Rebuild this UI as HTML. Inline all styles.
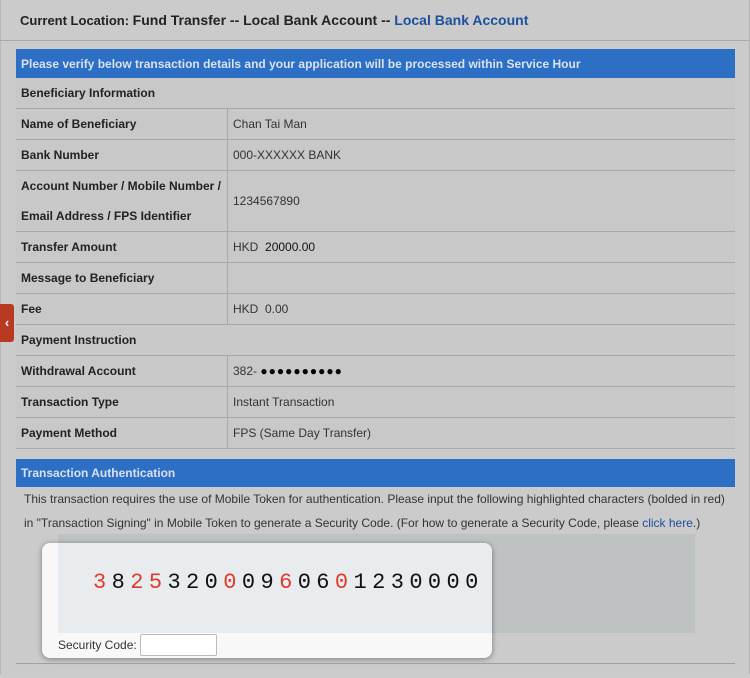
<!DOCTYPE html>
<html><head><style>
body{margin:0;width:750px;height:678px;background:#cccccc;font-family:"Liberation Sans",sans-serif;position:relative;overflow:hidden;color:#222}
.outer{position:absolute;left:0;top:0;width:748px;height:674px;border-right:1px solid #b0b0b0;border-left:1px solid #b8b8b8;background:#cbcbcb}
.loc{position:absolute;left:20px;top:12px;font-size:13px;font-weight:bold;color:#222}
.loc .b{font-size:14px}
.loc a{color:#1d4f9c;text-decoration:none}
.hr{position:absolute;left:0;top:40px;width:749px;border-top:1px solid #a8a8a8}
table{position:absolute;left:16px;top:49px;width:719px;border-collapse:collapse;font-size:12px}
td{border-bottom:1px solid #a8a8a8;height:30px;padding:0 0 0 5px;background:#c8c8c8}
td.l{width:206px;font-weight:bold;border-right:1px solid #a8a8a8}
td.v{color:#333}
tr.h td{background:#2c6fc4;color:#d8e2f0;font-weight:bold;height:29px;border:none}
.ta{position:absolute;left:16px;top:459px;width:719px;height:28px;background:#2c6fc4;color:#d8e2f0;font-weight:bold;font-size:12px;line-height:28px;text-indent:5px}
.txt{position:absolute;left:24px;top:487px;width:710px;font-size:12px;line-height:24px;color:#333}
.txt a{color:#1d4f9c;text-decoration:none}
.panel{position:absolute;left:58px;top:534px;width:637px;height:99px;background:#bec2c2}
.pop{position:absolute;left:42px;top:543px;width:450px;height:115px;background:#f8f8f8;border-radius:8px;box-shadow:0 1px 6px rgba(0,0,0,.4);overflow:hidden}
.pop .top{position:absolute;left:16px;top:0;width:434px;height:90px;background:#e8ecef}
.code{position:absolute;left:51px;top:27px;font-family:"Liberation Mono",monospace;font-size:22px;letter-spacing:5.4px;color:#111;white-space:nowrap}
.code span{color:#e03a2c}
.sc{position:absolute;left:16px;top:95px;font-size:12px;color:#333}
.inp{position:absolute;left:98px;top:91px;width:75px;height:20px;background:#fff;border:1px solid #bbb;border-radius:2px}
.bot{position:absolute;left:16px;top:663px;width:719px;border-top:1px solid #a0a0a0}
.tab{position:absolute;left:0;top:304px;width:14px;height:38px;background:#b83a22;border-radius:0 3px 3px 0;color:#fff;font-size:13px;font-weight:bold;line-height:38px;text-align:center}
</style></head><body>
<div class="outer"></div>
<div class="loc">Current Location: <span class="b">Fund Transfer -- Local Bank Account -- <a>Local Bank Account</a></span></div>
<div class="hr"></div>
<table>
<tr class="h"><td colspan="2">Please verify below transaction details and your application will be processed within Service Hour</td></tr>
<tr><td colspan="2" style="font-weight:bold">Beneficiary Information</td></tr>
<tr><td class="l">Name of Beneficiary</td><td class="v">Chan Tai Man</td></tr>
<tr><td class="l">Bank Number</td><td class="v">000-XXXXXX BANK</td></tr>
<tr><td class="l" style="height:60px;line-height:30px">Account Number / Mobile Number / Email Address / FPS Identifier</td><td class="v">1234567890</td></tr>
<tr><td class="l">Transfer Amount</td><td class="v">HKD &nbsp;<span style="color:#111">20000.00</span></td></tr>
<tr><td class="l">Message to Beneficiary</td><td class="v"></td></tr>
<tr><td class="l">Fee</td><td class="v">HKD &nbsp;0.00</td></tr>
<tr><td colspan="2" style="font-weight:bold">Payment Instruction</td></tr>
<tr><td class="l">Withdrawal Account</td><td class="v">382- <span style="color:#000;letter-spacing:1px">●●●●●●●●●●</span></td></tr>
<tr><td class="l">Transaction Type</td><td class="v">Instant Transaction</td></tr>
<tr><td class="l">Payment Method</td><td class="v">FPS (Same Day Transfer)</td></tr>
</table>
<div class="ta">Transaction Authentication</div>
<div class="txt">This transaction requires the use of Mobile Token for authentication. Please input the following highlighted characters (bolded in red) in "Transaction Signing" in Mobile Token to generate a Security Code. (For how to generate a Security Code, please <a>click here</a>.)</div>
<div class="panel"></div>
<div class="pop"><div class="top"></div>
<div class="code"><span>3</span>8<span>25</span>320<span>0</span>09<span>6</span>06<span>0</span>1230000</div>
<div class="sc">Security Code:</div><div class="inp"></div></div>
<div class="bot"></div>
<div class="tab">&lsaquo;</div>
</body></html>
